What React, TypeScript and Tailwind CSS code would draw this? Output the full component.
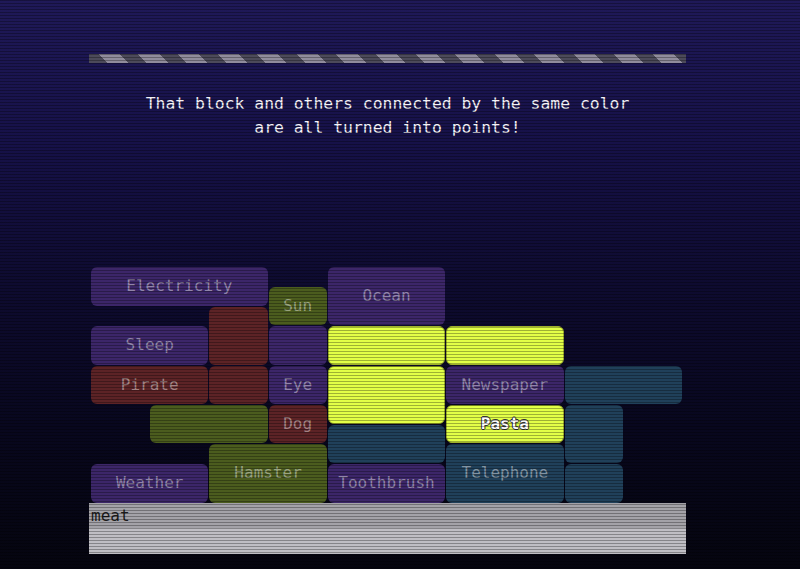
import React from 'react';

type Tint = 'purple' | 'red' | 'green' | 'teal' | 'lit';

interface Block {
  col: number;
  span: number;
  row: number; // counted in half-rows from the floor
  tall: number;
  tint: Tint;
  label?: string;
}

const COL_W = 59.2;
const HALF_ROW = 19.7;

const tintClass: Record<Tint, string> = {
  purple: 'bg-[#3c2669] text-white/45',
  red: 'bg-[#5c2326] text-white/45',
  green: 'bg-[#4b5c1e] text-white/45',
  teal: 'bg-[#20405a] text-white/45',
  lit: 'bg-[#e2ff47] border border-[#9fb02a] text-white font-semibold [text-shadow:1px_0_0_#333,-1px_0_0_#333,0_1px_0_#333,0_-1px_0_#333]',
};

const stack: Block[] = [
  { col: 0, span: 2, row: 0, tall: 2, tint: 'purple', label: 'Weather' },
  { col: 2, span: 2, row: 0, tall: 3, tint: 'green', label: 'Hamster' },
  { col: 4, span: 2, row: 0, tall: 2, tint: 'purple', label: 'Toothbrush' },
  { col: 6, span: 2, row: 0, tall: 3, tint: 'teal', label: 'Telephone' },
  { col: 8, span: 1, row: 0, tall: 2, tint: 'teal' },
  { col: 4, span: 2, row: 2, tall: 2, tint: 'teal' },
  { col: 8, span: 1, row: 2, tall: 3, tint: 'teal' },
  { col: 1, span: 2, row: 3, tall: 2, tint: 'green' },
  { col: 3, span: 1, row: 3, tall: 2, tint: 'red', label: 'Dog' },
  { col: 6, span: 2, row: 3, tall: 2, tint: 'lit', label: 'Pasta' },
  { col: 4, span: 2, row: 4, tall: 3, tint: 'lit' },
  { col: 0, span: 2, row: 5, tall: 2, tint: 'red', label: 'Pirate' },
  { col: 2, span: 1, row: 5, tall: 2, tint: 'red' },
  { col: 3, span: 1, row: 5, tall: 2, tint: 'purple', label: 'Eye' },
  { col: 6, span: 2, row: 5, tall: 2, tint: 'purple', label: 'Newspaper' },
  { col: 8, span: 2, row: 5, tall: 2, tint: 'teal' },
  { col: 0, span: 2, row: 7, tall: 2, tint: 'purple', label: 'Sleep' },
  { col: 2, span: 1, row: 7, tall: 3, tint: 'red' },
  { col: 3, span: 1, row: 7, tall: 2, tint: 'purple' },
  { col: 4, span: 2, row: 7, tall: 2, tint: 'lit' },
  { col: 6, span: 2, row: 7, tall: 2, tint: 'lit' },
  { col: 3, span: 1, row: 9, tall: 2, tint: 'green', label: 'Sun' },
  { col: 4, span: 2, row: 9, tall: 3, tint: 'purple', label: 'Ocean' },
  { col: 0, span: 3, row: 10, tall: 2, tint: 'purple', label: 'Electricity' },
];

function StackBlock({ b }: { b: Block }) {
  return (
    <div
      className={`absolute flex items-center justify-center rounded-[6px] text-[16px] ${tintClass[b.tint]}`}
      style={{
        left: 2 + b.col * COL_W,
        width: b.span * COL_W - 1,
        bottom: b.row * HALF_ROW + 0.5,
        height: b.tall * HALF_ROW - 1,
      }}
    >
      {b.label}
    </div>
  );
}

export default function App() {
  return (
    <div className="relative h-[569px] w-full overflow-hidden bg-[linear-gradient(to_bottom,#1f1958_0%,#161148_25%,#0e0b30_50%,#08071e_75%,#05050f_100%)] font-['DejaVu_Sans_Mono',monospace]">
      <div className="ml-[89px] flex w-[597px] flex-col pt-[54px]">
        {/* hazard stripe */}
        <div className="h-[9px] bg-[repeating-linear-gradient(45deg,#4c4a5a_0px,#4c4a5a_13px,#908c9c_13px,#908c9c_28px)]" />

        <p className="mt-[29px] text-center text-[16.4px] leading-[24px] text-[#f4f2f7]">
          That block and others connected by the same color
          <br />
          are all turned into points!
        </p>

        {/* the pile */}
        <div className="relative h-[363px]">
          {stack.map((b, i) => (
            <StackBlock key={i} b={b} />
          ))}
        </div>

        <div className="h-[25px] bg-[#a3a2a8] pl-[2px] text-[16px] leading-[25px] text-[#1a1a1a]">meat</div>
        <div className="h-[26px] bg-[#bfbec4]" />
      </div>

      {/* CRT scanlines */}
      <div className="pointer-events-none absolute inset-0 bg-[repeating-linear-gradient(to_bottom,rgba(0,0,0,0.3)_0px,rgba(0,0,0,0.3)_1px,transparent_1px,transparent_3px)]" />
    </div>
  );
}
